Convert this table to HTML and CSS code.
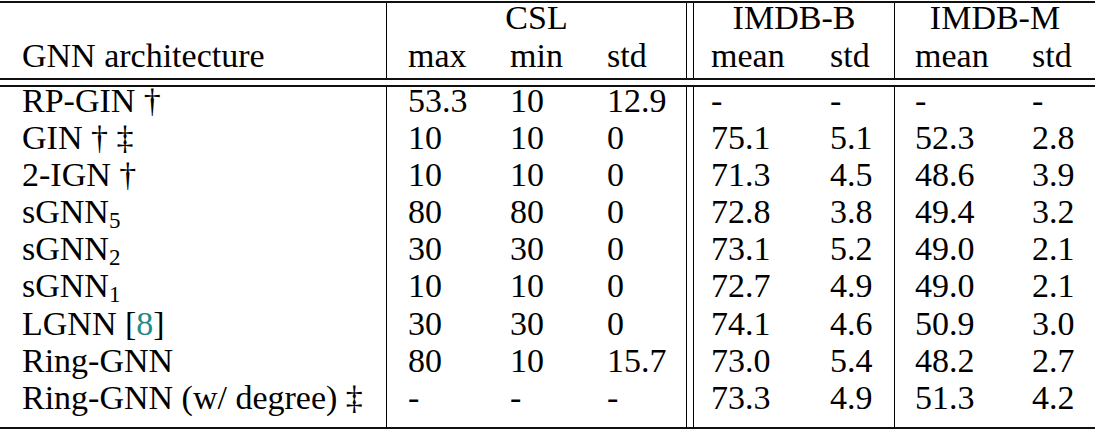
FILE: index.html
```html
<!DOCTYPE html>
<html>
<head>
<meta charset="utf-8">
<link rel="stylesheet" href="styles.css">
</head>
<body>
<div class="tbl">
  <div class="c hd first"></div>
  <div class="c hd rl span3 center">CSL</div>
  <div class="c hd rl gap"></div>
  <div class="c hd rl span2 center">IMDB-B</div>
  <div class="c hd rl span2 center">IMDB-M</div>

  <div class="c hd first">GNN architecture</div>
  <div class="c hd rl">max</div>
  <div class="c hd">min</div>
  <div class="c hd">std</div>
  <div class="c hd rl gap"></div>
  <div class="c hd rl mb">mean</div>
  <div class="c hd">std</div>
  <div class="c hd rl mm">mean</div>
  <div class="c hd">std</div>

  <div class="dbl"></div>

  <div class="c first">RP-GIN †</div><div class="c rl">53.3</div><div class="c">10</div><div class="c">12.9</div><div class="c rl gap"></div><div class="c rl mb">-</div><div class="c">-</div><div class="c rl mm">-</div><div class="c">-</div>
  <div class="c first">GIN † ‡</div><div class="c rl">10</div><div class="c">10</div><div class="c">0</div><div class="c rl gap"></div><div class="c rl mb">75.1</div><div class="c">5.1</div><div class="c rl mm">52.3</div><div class="c">2.8</div>
  <div class="c first">2-IGN †</div><div class="c rl">10</div><div class="c">10</div><div class="c">0</div><div class="c rl gap"></div><div class="c rl mb">71.3</div><div class="c">4.5</div><div class="c rl mm">48.6</div><div class="c">3.9</div>
  <div class="c first">sGNN<span class="sb">5</span></div><div class="c rl">80</div><div class="c">80</div><div class="c">0</div><div class="c rl gap"></div><div class="c rl mb">72.8</div><div class="c">3.8</div><div class="c rl mm">49.4</div><div class="c">3.2</div>
  <div class="c first">sGNN<span class="sb">2</span></div><div class="c rl">30</div><div class="c">30</div><div class="c">0</div><div class="c rl gap"></div><div class="c rl mb">73.1</div><div class="c">5.2</div><div class="c rl mm">49.0</div><div class="c">2.1</div>
  <div class="c first">sGNN<span class="sb">1</span></div><div class="c rl">10</div><div class="c">10</div><div class="c">0</div><div class="c rl gap"></div><div class="c rl mb">72.7</div><div class="c">4.9</div><div class="c rl mm">49.0</div><div class="c">2.1</div>
  <div class="c first">LGNN [<span class="cite">8</span>]</div><div class="c rl">30</div><div class="c">30</div><div class="c">0</div><div class="c rl gap"></div><div class="c rl mb">74.1</div><div class="c">4.6</div><div class="c rl mm">50.9</div><div class="c">3.0</div>
  <div class="c first">Ring-GNN</div><div class="c rl">80</div><div class="c">10</div><div class="c">15.7</div><div class="c rl gap"></div><div class="c rl mb">73.0</div><div class="c">5.4</div><div class="c rl mm">48.2</div><div class="c">2.7</div>
  <div class="c first">Ring-GNN (w/ degree) ‡</div><div class="c rl">-</div><div class="c">-</div><div class="c">-</div><div class="c rl gap"></div><div class="c rl mb">73.3</div><div class="c">4.9</div><div class="c rl mm">51.3</div><div class="c">4.2</div>
</div>
</body>
</html>
```

FILE: styles.css
```css
html, body {
  margin: 0;
  padding: 0;
  background: #fff;
}

body {
  font-family: "Liberation Serif", "Times New Roman", Tinos, "DejaVu Serif", serif;
  font-size: 34px;
  color: #000;
}

.tbl {
  display: grid;
  width: 1095px;
  margin-top: 1px;
  grid-template-columns: 386px 102px 97px 101px 7px 115px 86px 116px 85px;
  grid-template-rows: 37.5px 37.5px 9px repeat(8, 37.1px) 43.2px;
  border-top: 2px solid #111;
  border-bottom: 2px solid #111;
}

.c {
  box-sizing: border-box;
  padding-left: 22px;
  line-height: 27px;
  white-space: nowrap;
  font-family: "Liberation Serif", "Times New Roman", serif;
}

.c.hd {
  line-height: 28px;
  padding-top: 1px;
}

.c.first {
  padding-left: 22px;
}

.c.rl {
  border-left: 1px solid #000;
  padding-left: 21px;
}

.c.gap {
  padding: 0;
}

.c.mb {
  padding-left: 17px;
}

.c.mm {
  padding-left: 20px;
}

.span3 {
  grid-column: span 3;
}

.span2 {
  grid-column: span 2;
}

.c.center {
  text-align: center;
  padding-left: 0;
}

.dbl {
  grid-column: 1 / -1;
  border-top: 2px solid #111;
  border-bottom: 2px solid #111;
}

.sb {
  display: inline-block;
  font-size: 23px;
  line-height: 10px;
  transform: translateY(5px);
}

.cite {
  color: #1f8a8a;
}
```
